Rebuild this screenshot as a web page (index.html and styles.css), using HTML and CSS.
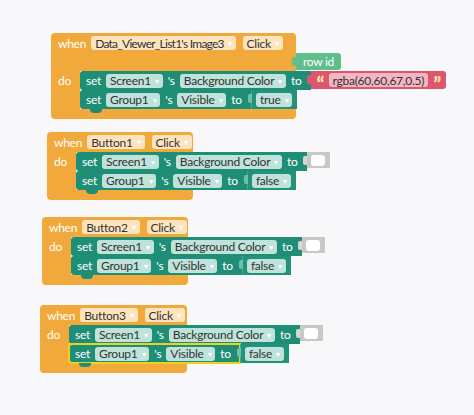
FILE: index.html
```html
<!DOCTYPE html>
<html lang="en">
<head>
    <meta charset="UTF-8">
    <meta name="viewport" content="width=device-width, initial-scale=1.0">
    <title>Blocks</title>
    <link rel="stylesheet" href="styles.css">
</head>
<body>

<div class="workspace">

    <!-- event 1 -->
    <div class="event ev1">
        <div class="ev-head tall">
            <div class="head-line">
                <span class="kw">when</span>
                <span class="field f-orange"><span class="narrow">Data_Viewer_List1's Image3</span> <i class="arr">▾</i></span>
                <span class="field f-orange gap-l">Click <i class="arr">▾</i></span>
            </div>
            <div class="param-line">
                <span class="param">row id</span>
            </div>
        </div>
        <div class="ev-body">
            <div class="arm"><span class="kw">do</span></div>
            <div class="stack">
                <div class="row">
                    <div class="stmt">
                        <span class="kw">set</span>
                        <span class="field f-teal">Screen1 <i class="arr">▾</i></span>
                        <span class="kw">'s</span>
                        <span class="field f-teal">Background Color <i class="arr">▾</i></span>
                        <span class="kw">to</span>
                    </div>
                    <div class="val-text">
                        <span class="quote">&ldquo;</span>
                        <span class="field f-pink">rgba(60,60,67,0.5)</span>
                        <span class="quote">&rdquo;</span>
                    </div>
                </div>
                <div class="row">
                    <div class="stmt">
                        <span class="kw">set</span>
                        <span class="field f-teal">Group1 <i class="arr">▾</i></span>
                        <span class="kw">'s</span>
                        <span class="field f-teal">Visible <i class="arr">▾</i></span>
                        <span class="kw">to</span>
                    </div>
                    <div class="logic"><span class="field f-teal">true <i class="arr">▾</i></span></div>
                </div>
            </div>
        </div>
        <div class="ev-foot"></div>
    </div>

    <!-- event 2 -->
    <div class="event ev2">
        <div class="ev-head">
            <div class="head-line">
                <span class="kw">when</span>
                <span class="field f-orange">Button1 <i class="arr">▾</i></span>
                <span class="field f-orange gap-l">Click <i class="arr">▾</i></span>
            </div>
        </div>
        <div class="ev-body">
            <div class="arm"><span class="kw">do</span></div>
            <div class="stack">
                <div class="row">
                    <div class="stmt">
                        <span class="kw">set</span>
                        <span class="field f-teal">Screen1 <i class="arr">▾</i></span>
                        <span class="kw">'s</span>
                        <span class="field f-teal">Background Color <i class="arr">▾</i></span>
                        <span class="kw">to</span>
                    </div>
                    <div class="val-color"><span class="swatch"></span></div>
                </div>
                <div class="row">
                    <div class="stmt">
                        <span class="kw">set</span>
                        <span class="field f-teal">Group1 <i class="arr">▾</i></span>
                        <span class="kw">'s</span>
                        <span class="field f-teal">Visible <i class="arr">▾</i></span>
                        <span class="kw">to</span>
                    </div>
                    <div class="logic"><span class="field f-teal">false <i class="arr">▾</i></span></div>
                </div>
            </div>
        </div>
        <div class="ev-foot"></div>
    </div>

    <!-- event 3 -->
    <div class="event ev3">
        <div class="ev-head">
            <div class="head-line">
                <span class="kw">when</span>
                <span class="field f-orange">Button2 <i class="arr">▾</i></span>
                <span class="field f-orange gap-l">Click <i class="arr">▾</i></span>
            </div>
        </div>
        <div class="ev-body">
            <div class="arm"><span class="kw">do</span></div>
            <div class="stack">
                <div class="row">
                    <div class="stmt">
                        <span class="kw">set</span>
                        <span class="field f-teal">Screen1 <i class="arr">▾</i></span>
                        <span class="kw">'s</span>
                        <span class="field f-teal">Background Color <i class="arr">▾</i></span>
                        <span class="kw">to</span>
                    </div>
                    <div class="val-color"><span class="swatch"></span></div>
                </div>
                <div class="row">
                    <div class="stmt">
                        <span class="kw">set</span>
                        <span class="field f-teal">Group1 <i class="arr">▾</i></span>
                        <span class="kw">'s</span>
                        <span class="field f-teal">Visible <i class="arr">▾</i></span>
                        <span class="kw">to</span>
                    </div>
                    <div class="logic"><span class="field f-teal">false <i class="arr">▾</i></span></div>
                </div>
            </div>
        </div>
        <div class="ev-foot"></div>
    </div>

    <!-- event 4 -->
    <div class="event ev4">
        <div class="ev-head">
            <div class="head-line">
                <span class="kw">when</span>
                <span class="field f-orange">Button3 <i class="arr">▾</i></span>
                <span class="field f-orange gap-l">Click <i class="arr">▾</i></span>
            </div>
        </div>
        <div class="ev-body">
            <div class="arm"><span class="kw">do</span></div>
            <div class="stack">
                <div class="row">
                    <div class="stmt">
                        <span class="kw">set</span>
                        <span class="field f-teal">Screen1 <i class="arr">▾</i></span>
                        <span class="kw">'s</span>
                        <span class="field f-teal">Background Color <i class="arr">▾</i></span>
                        <span class="kw">to</span>
                    </div>
                    <div class="val-color"><span class="swatch"></span></div>
                </div>
                <div class="row">
                    <div class="stmt selected">
                        <span class="kw">set</span>
                        <span class="field f-teal">Group1 <i class="arr">▾</i></span>
                        <span class="kw">'s</span>
                        <span class="field f-teal">Visible <i class="arr">▾</i></span>
                        <span class="kw">to</span>
                    </div>
                    <div class="logic"><span class="field f-teal">false <i class="arr">▾</i></span></div>
                </div>
            </div>
        </div>
        <div class="ev-foot"></div>
    </div>

</div>

</body>
</html>
```

FILE: styles.css
```css
body {
    margin: 0;
    background: #f8f8fa;
    font-family: Lato, "Noto Sans", sans-serif;
    font-size: 12px;
    letter-spacing: -0.25px;
}
.workspace {
    position: relative;
    width: 474px;
    height: 415px;
}

/* event blocks sit on the canvas where the user dropped them */
.event {
    position: absolute;
}
.ev1 { left: 51px; top: 33px; width: 245px; }
.ev2 { left: 47px; top: 132px; width: 146px; }
.ev3 { left: 42px; top: 217px; width: 146px; }
.ev4 { left: 40px; top: 305px; width: 147px; }

.ev-head {
    background: #f2a93c;
    border-radius: 4px 4px 0 0;
    padding-left: 7px;
}
.head-line {
    display: flex;
    align-items: center;
    gap: 5px;
    height: 20px;
}
.gap-l {
    margin-left: 2px;
}
.narrow {
    letter-spacing: -0.75px;
}
.ev-head.tall {
    height: 38px;
}
.param-line {
    display: flex;
    justify-content: flex-end;
    margin-right: -45px;
    height: 18px;
}
.param {
    position: relative;
    background: #5fbe8b;
    color: #fff;
    width: 45px;
    height: 17px;
    line-height: 17px;
    text-align: center;
    border-radius: 0 3px 3px 0;
}
.param::before {
    content: "";
    position: absolute;
    left: -4px;
    top: 4px;
    width: 4px;
    height: 9px;
    background: #5fbe8b;
    border-radius: 2px 0 0 2px;
}

.ev-body {
    display: flex;
}
.arm {
    width: 29px;
    flex-shrink: 0;
    background: #f2a93c;
    padding-left: 7px;
    box-sizing: border-box;
    line-height: 20px;
}
.ev-foot {
    height: 10px;
    background: #f2a93c;
    border-radius: 0 0 4px 4px;
}

.kw {
    color: #fff;
    white-space: nowrap;
}

/* statement stack */
.stack {
    position: relative;
    display: flex;
    flex-direction: column;
    align-items: flex-start;
    flex-shrink: 0;
}
.stack::after {
    content: "";
    position: absolute;
    left: 10px;
    bottom: -4px;
    width: 12px;
    height: 4px;
    background: #1f8e76;
    border-radius: 0 0 6px 6px;
}
.row {
    display: flex;
    height: 19px;
}
.stmt {
    display: flex;
    align-items: center;
    gap: 5px;
    padding: 0 9px 0 6px;
    background: #1f8e76;
    border-radius: 3px 0 0 3px;
}
.stmt.selected {
    outline: 2px solid #efd21f;
    outline-offset: -1px;
}

.field {
    display: flex;
    align-items: center;
    gap: 4px;
    height: 14px;
    padding: 0 4px 0 4px;
    border-radius: 3px;
    color: #333;
    white-space: nowrap;
}
.f-orange { background: #fde4bf; }
.f-teal { background: #bfe3da; }
.f-pink { background: #f3b7c2; padding: 0 4px; }
.arr {
    font-style: normal;
    font-size: 8px;
    color: #fff;
}

/* value blocks plugged into sockets */
.val-text {
    position: relative;
    display: flex;
    align-items: center;
    gap: 5px;
    height: 18px;
    padding: 0 6px;
    background: #dd5670;
    border-radius: 0 3px 3px 0;
}
.val-text::before,
.val-color::before,
.logic::before {
    content: "";
    position: absolute;
    left: -4px;
    top: 4px;
    width: 4px;
    height: 9px;
    border-radius: 2px 0 0 2px;
}
.val-text::before { background: #dd5670; }
.quote {
    color: #fde3a8;
    font-size: 20px;
    font-weight: 900;
    line-height: 1;
    margin-top: 8px;
    letter-spacing: -1px;
}
.val-color {
    position: relative;
    display: flex;
    align-items: center;
    justify-content: center;
    width: 23px;
    height: 16px;
    background: #c8c8c8;
}
.val-color::before { background: #d6d6d6; }
.swatch {
    width: 14px;
    height: 11px;
    background: #fff;
    border-radius: 3px;
}
.logic {
    position: relative;
    display: flex;
    align-items: center;
    padding: 0 5px 0 4px;
    background: #22937a;
    border-left: 1px solid #43a68f;
}
.logic::before { background: #6fbfac; }
```
